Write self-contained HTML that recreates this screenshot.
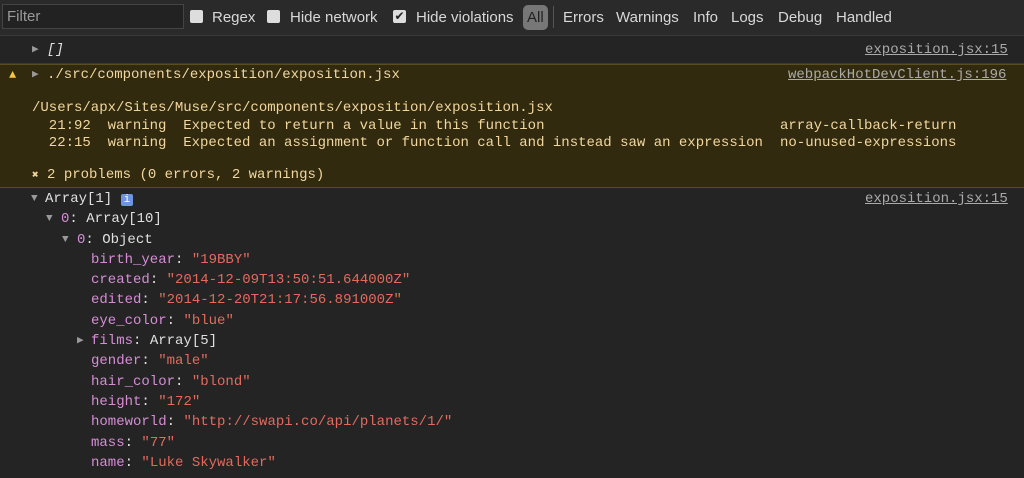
<!DOCTYPE html>
<html><head><style>
body{margin:0;width:1024px;height:478px;background:#242424;overflow:hidden;position:relative;font-family:"Liberation Mono",monospace;font-size:14px;color:#e0e0e0}
.tb{position:absolute;left:0;top:0;width:1024px;height:35px;background:#2a2a2a;border-bottom:1px solid #3a3a3a;font-family:"Liberation Sans",sans-serif;font-size:15px;color:#d8d8d8}
.tb span{position:absolute;top:9px}
.filter{position:absolute;left:2px;top:4px;width:182px;height:25px;border:1px solid #444;background:#222;color:#999;box-sizing:border-box;padding:3px 4px;font-size:15px}
.cb{position:absolute;top:10px;width:13px;height:13px;background:#ddd;border-radius:2px}
.l{position:absolute;white-space:pre;line-height:18px}
.warn{position:absolute;left:0;top:64px;width:1024px;height:122px;background:#322a0f;border-top:1px solid #5a4d1e;border-bottom:1px solid #5a4d1e}
.y{color:#f1d79f}
.lnk{color:#aaa;text-decoration:underline}
.k{color:#d68dd6}.s{color:#e46a5e}
.t{position:absolute;color:#999;font-size:11px;line-height:18px}
</style></head><body>
<div class="tb">
<div class="filter">Filter</div>
<div class="cb" style="left:190px"></div><span style="left:212px">Regex</span>
<div class="cb" style="left:267px"></div><span style="left:290px">Hide network</span>
<div class="cb" style="left:393px;color:#222;font-size:12px;line-height:13px;text-align:center">✔</div><span style="left:416px">Hide violations</span>
<div style="position:absolute;left:523px;top:5px;width:25px;height:25px;background:#777;border-radius:5px"></div><span style="left:527px;color:#222">All</span>
<div style="position:absolute;left:553px;top:6px;width:1px;height:22px;background:#555"></div>
<span style="left:563px">Errors</span><span style="left:616px">Warnings</span><span style="left:693px">Info</span><span style="left:731px">Logs</span><span style="left:778px">Debug</span><span style="left:836px">Handled</span>
</div>
<span class="t" style="left:32px;top:41px">▶</span>
<div class="l" style="left:47px;top:41px"><i>[]</i></div>
<div class="l lnk" style="left:865px;top:41px">exposition.jsx:15</div>
<div style="position:absolute;left:0;top:63px;width:1024px;height:1px;background:#3a3a3a"></div>
<div class="warn"></div>
<div class="l" style="left:9px;top:66px;color:#f4c542;font-size:12px">▲</div>
<span class="t" style="left:32px;top:66px">▶</span>
<div class="l y" style="left:47px;top:66px">./src/components/exposition/exposition.jsx</div>
<div class="l lnk" style="left:788px;top:66px">webpackHotDevClient.js:196</div>
<div class="l y" style="left:32px;top:99px">/Users/apx/Sites/Muse/src/components/exposition/exposition.jsx</div>
<div class="l y" style="left:32px;top:117px">  21:92  warning  Expected to return a value in this function</div>
<div class="l y" style="left:780px;top:117px">array-callback-return</div>
<div class="l y" style="left:32px;top:134px">  22:15  warning  Expected an assignment or function call and instead saw an expression</div>
<div class="l y" style="left:780px;top:134px">no-unused-expressions</div>
<div class="l y" style="left:32px;top:166px"><span style="font-size:11px">✖</span> 2 problems (0 errors, 2 warnings)</div>
<span class="t" style="left:31px;top:190px">▼</span>
<div class="l" style="left:45px;top:190px">Array[1] <span style="background:#6e95e0;color:#fff;font-size:11px;padding:0 3px;border-radius:2px">i</span></div>
<div class="l lnk" style="left:865px;top:190px">exposition.jsx:15</div>
<span class="t" style="left:46px;top:210px">▼</span>
<div class="l" style="left:61px;top:210px"><span class="k">0</span>: Array[10]</div>
<span class="t" style="left:62px;top:231px">▼</span>
<div class="l" style="left:77px;top:231px"><span class="k">0</span>: Object</div>
<div class="l" style="left:91px;top:251px"><span class="k">birth_year</span>: <span class="s">"19BBY"</span></div>
<div class="l" style="left:91px;top:271px"><span class="k">created</span>: <span class="s">"2014-12-09T13:50:51.644000Z"</span></div>
<div class="l" style="left:91px;top:291px"><span class="k">edited</span>: <span class="s">"2014-12-20T21:17:56.891000Z"</span></div>
<div class="l" style="left:91px;top:312px"><span class="k">eye_color</span>: <span class="s">"blue"</span></div>
<span class="t" style="left:77px;top:332px">▶</span>
<div class="l" style="left:91px;top:332px"><span class="k">films</span>: Array[5]</div>
<div class="l" style="left:91px;top:352px"><span class="k">gender</span>: <span class="s">"male"</span></div>
<div class="l" style="left:91px;top:373px"><span class="k">hair_color</span>: <span class="s">"blond"</span></div>
<div class="l" style="left:91px;top:393px"><span class="k">height</span>: <span class="s">"172"</span></div>
<div class="l" style="left:91px;top:413px"><span class="k">homeworld</span>: <span class="s">"http://swapi.co/api/planets/1/"</span></div>
<div class="l" style="left:91px;top:434px"><span class="k">mass</span>: <span class="s">"77"</span></div>
<div class="l" style="left:91px;top:454px"><span class="k">name</span>: <span class="s">"Luke Skywalker"</span></div>
</body></html>
